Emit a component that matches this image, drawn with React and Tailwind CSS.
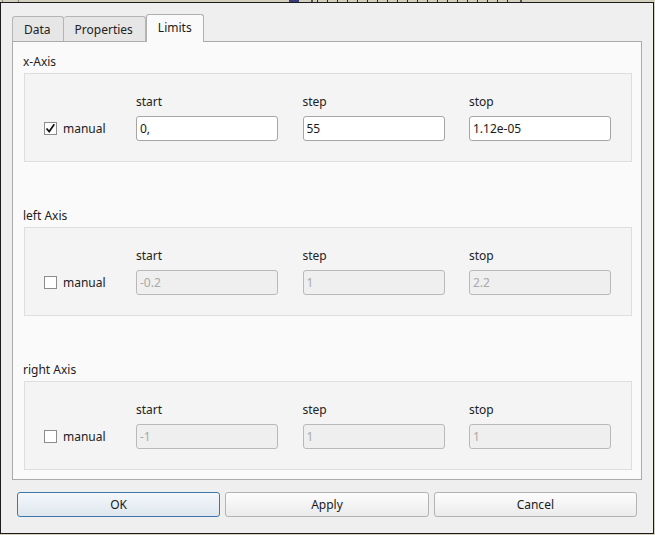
import React from "react";

const font = { fontFamily: '"Noto Sans", "Open Sans", sans-serif' };

function Check({ checked }) {
  return (
    <div className="w-[13px] h-[13px] border border-[#8c8c8c] bg-white flex items-center justify-center shrink-0">
      {checked && (
        <svg width="11" height="11" viewBox="0 0 11 11">
          <path d="M1.5 5.5 L4.2 8.6 L9.3 1.2" fill="none" stroke="#111" strokeWidth="1.7" />
        </svg>
      )}
    </div>
  );
}

function Field({ label, value, disabled }) {
  return (
    <div className="flex flex-col w-[142px]">
      <div className="h-[17px] pt-[1px] leading-[16px] text-[12px] text-[#222] mb-[6px]">{label}</div>
      <div
        className={
          "h-[25px] rounded-[3px] border flex items-center pl-[3px] text-[12px] " +
          (disabled
            ? "bg-[#efefef] border-[#b9b9b9] text-[#a9a9a9]"
            : "bg-white border-[#a6a6a6] text-[#1a1a1a]")
        }
      >
        {value}
      </div>
    </div>
  );
}

function Group({ title, checked, values, mt }) {
  const disabled = !checked;
  return (
    <div className={mt}>
      <div className="h-[17px] pt-[1px] leading-[16px] text-[12px] text-[#222] mb-[3px] ml-[-1px]">{title}</div>
      <div className="h-[89px] border border-[#dedede] bg-[#f4f4f4] flex items-end pb-[20px] pl-[19px]">
        <div className="w-[92px] h-[25px] flex items-center gap-[6px]">
          <Check checked={checked} />
          <span className="text-[12px] text-[#222]">manual</span>
        </div>
        <div className="flex gap-[24.5px]">
          <Field label="start" value={values[0]} disabled={disabled} />
          <Field label="step" value={values[1]} disabled={disabled} />
          <Field label="stop" value={values[2]} disabled={disabled} />
        </div>
      </div>
    </div>
  );
}

function TopStrip() {
  const ticks = [];
  for (let x = 317; x <= 507; x += 10) ticks.push(x);
  return (
    <div className="h-[2px] w-[655px] bg-[#d3cfbd]">
      <svg width="655" height="2" className="block">
        <rect x="2" y="0" width="1" height="2" fill="#888" />
        <rect x="18" y="0" width="1" height="2" fill="#888" />
        <rect x="289" y="0" width="10" height="2" fill="#3b3b78" />
        <rect x="311" y="0" width="2" height="2" fill="#555" />
        <rect x="520" y="0" width="2" height="2" fill="#555" />
        {ticks.map((x) => (
          <rect key={x} x={x} y="0" width="1" height="2" fill="#1010d0" />
        ))}
      </svg>
    </div>
  );
}

export default function App() {
  return (
    <div className="w-[655px] h-[535px] bg-[#d3cfbd] overflow-hidden" style={font}>
      <TopStrip />
      <div className="w-[654px] h-[532px] border border-[#1c1c1c] bg-[#efefef] flex flex-col px-[11px] pt-[11px]">
        {/* tab bar */}
        <div className="h-[27px] flex items-end">
          <div className="h-[25px] pl-[11px] pr-[12px] border border-b-0 border-[#b5b5b5] rounded-t-[3px] bg-[#e6e6e6] flex items-center pt-[1px] text-[12px] text-[#222]">
            Data
          </div>
          <div className="h-[25px] pl-[11px] pr-[12px] border border-l-0 border-b-0 border-[#b5b5b5] rounded-t-[3px] bg-[#e6e6e6] flex items-center pt-[1px] text-[12px] text-[#222]">
            Properties
          </div>
          <div className="relative z-10 h-[28px] mb-[-1px] px-[11px] border border-b-0 border-[#b0b0b0] rounded-t-[3px] bg-[#fafafa] flex items-center pb-[1px] text-[12px] text-[#1a1a1a]">
            Limits
          </div>
        </div>
        {/* pane */}
        <div className="h-[439px] border border-[#ababab] bg-[#fafafa] pt-[11px] pb-[8px] pl-[11px] pr-[9px]">
          <Group title="x-Axis" checked={true} values={["0,", "55", "1.12e-05"]} mt="" />
          <Group title="left Axis" checked={false} values={["-0.2", "1", "2.2"]} mt="mt-[45px]" />
          <Group title="right Axis" checked={false} values={["-1", "1", "1"]} mt="mt-[45px]" />
        </div>
        {/* buttons */}
        <div className="mt-[12px] px-[5px] flex gap-[5px]">
          <button className="flex-1 h-[25px] rounded-[3px] border border-[#3d78aa] bg-gradient-to-b from-[#f5f8fb] to-[#dde6ee] text-[12px] text-[#1a1a1a]">
            OK
          </button>
          <button className="flex-1 h-[25px] rounded-[3px] border border-[#b3b3b3] bg-gradient-to-b from-[#fdfdfd] to-[#ebebeb] text-[12px] text-[#1a1a1a]">
            Apply
          </button>
          <button className="flex-1 h-[25px] rounded-[3px] border border-[#b3b3b3] bg-gradient-to-b from-[#fdfdfd] to-[#ebebeb] text-[12px] text-[#1a1a1a]">
            Cancel
          </button>
        </div>
      </div>
    </div>
  );
}
